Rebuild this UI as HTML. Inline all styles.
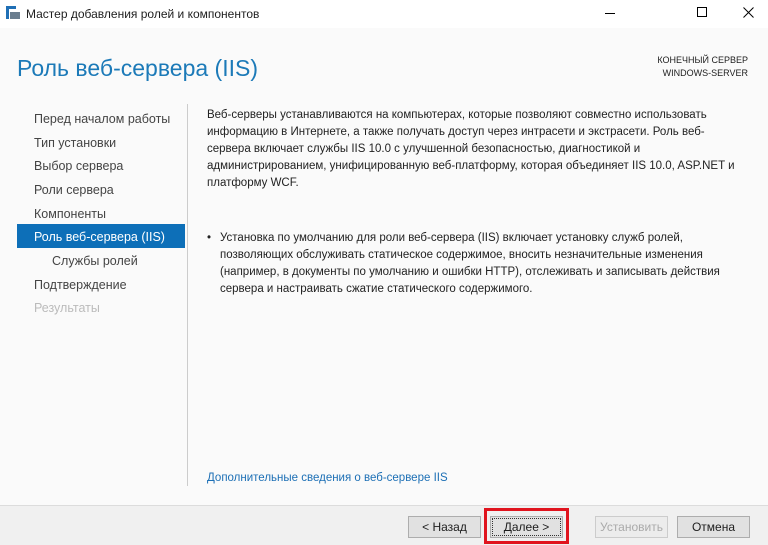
<!DOCTYPE html><html><head><meta charset="utf-8"><style>
*{margin:0;padding:0;box-sizing:border-box}
body{width:768px;height:545px;background:#fafafa;font-family:"Liberation Sans",sans-serif;position:relative;overflow:hidden;color:#1e1e1e}
.tb{position:absolute;left:0;top:0;width:768px;height:28px;background:#fff;font-size:12px}
.tb span{position:absolute;left:26px;top:7px}
.a{position:absolute}
h1{position:absolute;left:17px;top:55px;font-weight:normal;font-size:23px;color:#1c7ab8}
.srv{position:absolute;right:20px;top:54px;font-size:9px;text-align:right;line-height:13px}
.nav div{position:absolute;left:34px;font-size:12.5px;color:#444}
.sel{position:absolute;left:17px;top:224px;width:168px;height:24px;background:#0d6fb8}
.vl{position:absolute;left:187px;top:104px;width:1px;height:382px;background:#ccc}
.c{position:absolute;left:207px;font-size:11.5px;line-height:17px;color:#222}
.bot{position:absolute;left:0;top:505px;width:768px;height:40px;background:#f0f0f0;border-top:1px solid #dcdcdc}
.b{position:absolute;top:516px;height:22px;width:73px;border:1px solid #adadad;background:#e1e1e1;font-size:12px;text-align:center;line-height:20px}
</style></head><body>
<div class="tb">
<svg class="a" style="left:6px;top:6px" width="14" height="14"><rect x="0" y="0" width="3" height="13" fill="#1f6fb5"/><rect x="0" y="0" width="10" height="3" fill="#1f6fb5"/><rect x="4" y="6" width="10" height="7" fill="#6a7d8e"/></svg>
<span>Мастер добавления ролей и компонентов</span>
<div class="a" style="left:605px;top:13px;width:10px;height:1px;background:#000"></div>
<div class="a" style="left:697px;top:7px;width:10px;height:10px;border:1px solid #000"></div>
<svg class="a" style="left:743px;top:7px" width="11" height="11"><path d="M0.5 0.5L10.5 10.5M10.5 0.5L0.5 10.5" stroke="#000" stroke-width="1"/></svg>
</div>
<h1>Роль веб-сервера (IIS)</h1>
<div class="srv">КОНЕЧНЫЙ СЕРВЕР<br>WINDOWS-SERVER</div>
<div class="sel"></div>
<div class="nav">
<div style="top:112px">Перед началом работы</div>
<div style="top:136px">Тип установки</div>
<div style="top:159px">Выбор сервера</div>
<div style="top:183px">Роли сервера</div>
<div style="top:207px">Компоненты</div>
<div style="top:230px;color:#fff">Роль веб-сервера (IIS)</div>
<div style="top:254px;left:52px">Службы ролей</div>
<div style="top:278px">Подтверждение</div>
<div style="top:301px;color:#bbb">Результаты</div>
</div>
<div class="vl"></div>
<div class="c" style="top:107px;width:540px">Веб-серверы устанавливаются на компьютерах, которые позволяют совместно использовать информацию в Интернете, а также получать доступ через интрасети и экстрасети. Роль веб-сервера включает службы IIS 10.0 с улучшенной безопасностью, диагностикой и администрированием, унифицированную веб-платформу, которая объединяет IIS 10.0, ASP.NET и платформу WCF.</div>
<div class="c" style="top:230px">•</div>
<div class="c" style="top:230px;left:220px;width:520px">Установка по умолчанию для роли веб-сервера (IIS) включает установку служб ролей, позволяющих обслуживать статическое содержимое, вносить незначительные изменения (например, в документы по умолчанию и ошибки HTTP), отслеживать и записывать действия сервера и настраивать сжатие статического содержимого.</div>
<div class="c" style="top:470px;color:#1c6fb5">Дополнительные сведения о веб-сервере IIS</div>
<div class="bot"></div>
<div class="b" style="left:408px">&lt; Назад</div>
<div class="a" style="left:484px;top:508px;width:85px;height:36px;border:3px solid #e0141e"></div>
<div class="b" style="left:490px;width:73px;outline:1px dotted #333;outline-offset:-3px">Далее &gt;</div>
<div class="b" style="left:595px;color:#aaa;border-color:#ccc;background:#ececec">Установить</div>
<div class="b" style="left:677px">Отмена</div>
</body></html>
